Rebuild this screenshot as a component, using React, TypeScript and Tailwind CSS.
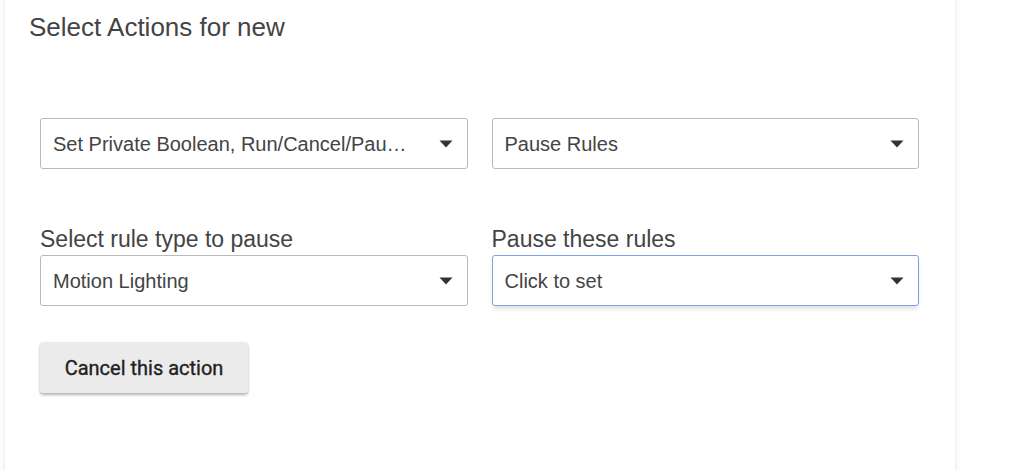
import React from "react";

function Caret() {
  return (
    <svg width="14" height="8" viewBox="0 0 14 8" className="shrink-0 ml-[28px]">
      <path d="M0.5 0.5 L13.5 0.5 L7 7.5 Z" fill="#333" />
    </svg>
  );
}

function Select({ text, focused }: { text: string; focused?: boolean }) {
  return (
    <div
      className={
        "h-[51px] flex items-center pl-[12px] pr-[14px] rounded-[3px] bg-white border " +
        (focused
          ? "border-[#7ba2e6] shadow-[0_4px_5px_-1px_rgba(0,0,0,0.12)]"
          : "border-[#b9b9b9]")
      }
    >
      <span className="flex-1 min-w-0 text-[20px] text-[#444] font-['Liberation_Sans',Arial,sans-serif] whitespace-nowrap overflow-hidden text-ellipsis">
        {text}
      </span>
      <Caret />
    </div>
  );
}

export default function App() {
  return (
    <div className="w-[1024px] h-[470px] bg-white overflow-hidden">
      <div className="ml-[5px] w-[950px] h-[520px] bg-white shadow-[0_0_5px_rgba(0,0,0,0.12)] pl-[35px] pr-[36px] font-['Liberation_Sans',Arial,sans-serif]">
        <div className="pt-[11px] -ml-[11px] text-[26px] leading-[32px] text-[#444]">
          Select Actions for new
        </div>
        <div className="mt-[75px] grid grid-cols-2 gap-x-[24px]">
          <Select text="Set Private Boolean, Run/Cancel/Pause Rules" />
          <Select text="Pause Rules" />
        </div>
        <div className="mt-[58px] grid grid-cols-2 gap-x-[24px]">
          <div>
            <div className="text-[23px] leading-[24px] text-[#444] mb-[4px]">Select rule type to pause</div>
            <Select text="Motion Lighting" />
          </div>
          <div>
            <div className="text-[23px] leading-[24px] text-[#444] mb-[4px]">Pause these rules</div>
            <Select text="Click to set" focused />
          </div>
        </div>
        <div className="mt-[36px]">
          <button className="h-[51px] w-[208px] rounded-[3px] bg-[#ebebeb] text-[20px] font-['Roboto',sans-serif] font-normal text-[#222] [-webkit-text-stroke:0.35px_#222] shadow-[0_2px_3px_rgba(0,0,0,0.3)]">
            Cancel this action
          </button>
        </div>
      </div>
    </div>
  );
}
